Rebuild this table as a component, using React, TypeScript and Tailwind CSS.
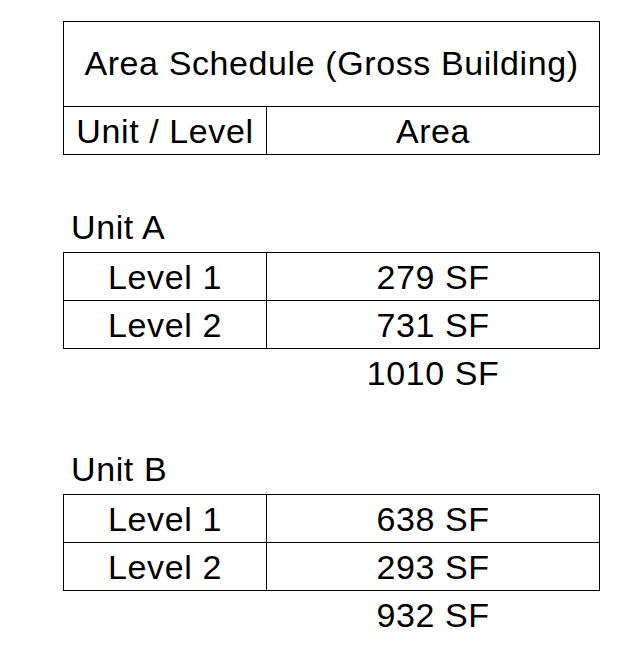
import React from 'react';

type Row = { level: string; area: string };
type Group = { unit: string; rows: Row[]; total: string };

const GROUPS: Group[] = [
  { unit: 'Unit A', rows: [{ level: 'Level 1', area: '279 SF' }, { level: 'Level 2', area: '731 SF' }], total: '1010 SF' },
  { unit: 'Unit B', rows: [{ level: 'Level 1', area: '638 SF' }, { level: 'Level 2', area: '293 SF' }], total: '932 SF' },
];

function Cells({ left, right }: { left: string; right: string }) {
  return (
    <div className="grid grid-cols-[203px_1fr] h-[48px] border-b border-black">
      <div className="flex items-center justify-center border-r border-black">{left}</div>
      <div className="flex items-center justify-center">{right}</div>
    </div>
  );
}

export default function App() {
  return (
    <div
      className="min-h-[660px] bg-white text-black text-[34px] leading-none tracking-[0.6px] pl-[63px] pt-[21px]"
      style={{ fontFamily: '"Liberation Sans", Arial, sans-serif' }}
    >
      <div className="w-[537px]">
        {/* Title + column headers */}
        <div className="border-t border-l border-r border-black">
          <div className="flex items-center justify-center h-[85px] pb-[2px] border-b border-black">
            Area Schedule (Gross Building)
          </div>
          <Cells left="Unit / Level" right="Area" />
        </div>

        {GROUPS.map((g) => (
          <div key={g.unit}>
            <div className="h-[49px]" />
            <div className="flex items-center h-[48px] pl-[8px] pb-[2px]">{g.unit}</div>
            <div className="border-t border-l border-r border-black">
              {g.rows.map((r) => (
                <Cells key={r.level} left={r.level} right={r.area} />
              ))}
            </div>
            <div className="grid grid-cols-[203px_1fr] h-[48px]">
              <div />
              <div className="flex items-center justify-center">{g.total}</div>
            </div>
          </div>
        ))}
      </div>
    </div>
  );
}
